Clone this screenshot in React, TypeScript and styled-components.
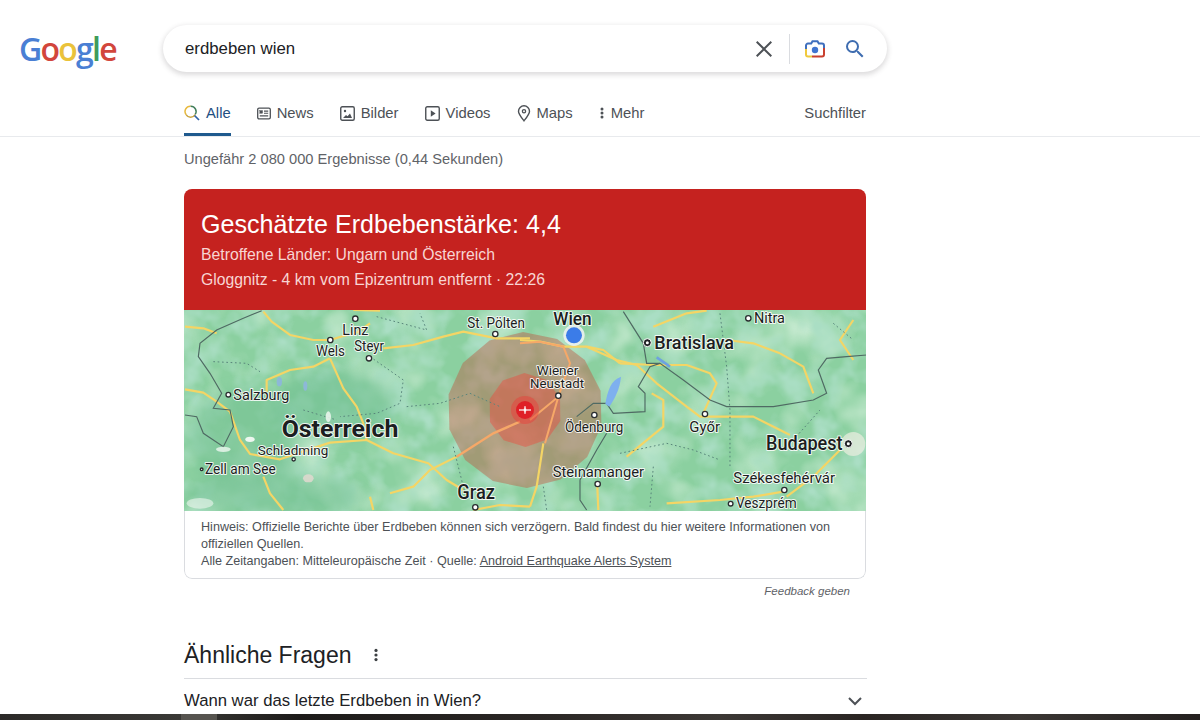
import React from "react";
import styled, { createGlobalStyle } from "styled-components";

const Global = createGlobalStyle`
  html, body { margin: 0; padding: 0; background: #fff; }
  body { font-family: "Liberation Sans", Arial, sans-serif; overflow: hidden; }
`;

const Page = styled.div`
  width: 1200px;
  height: 720px;
  display: flex;
  flex-direction: column;
  overflow: hidden;
`;
const Content = styled.div`
  flex: 1;
  min-height: 0;
`;
const Header = styled.header`
  display: flex;
  align-items: center;
  padding: 25px 0 0 19px;
`;
const Logo = styled.div`
  width: 97px;
  margin-right: 47px;
  font-family: "Open Sans", sans-serif;
  font-size: 32px;
  font-weight: 600;
  letter-spacing: -1.75px;
  line-height: 47px;
  white-space: nowrap;
`;
const Letter = styled.span<{ $c: string }>`
  color: ${(p) => p.$c};
`;
const SearchBox = styled.div`
  width: 724px;
  height: 47px;
  box-sizing: border-box;
  border-radius: 24px;
  background: #fff;
  box-shadow: 0 2px 5px 1px rgba(64, 60, 67, 0.18);
  display: flex;
  align-items: center;
  padding: 0 20px 0 22px;
`;
const Query = styled.div`
  flex: 1;
  font-size: 16.8px;
  color: #202124;
`;
const BoxDivider = styled.div`
  width: 1px;
  height: 30px;
  background: #dadce0;
  margin: 0 14px 0 13px;
`;
const SearchButton = styled.div`
  display: flex;
  margin-left: 17px;
`;
const Tabs = styled.nav`
  display: flex;
  align-items: flex-end;
  height: 65px;
  box-sizing: border-box;
  border-bottom: 1px solid #e8eaed;
  padding: 0 334px 0 184px;
  gap: 26px;
`;
const Tab = styled.div<{ $active?: boolean }>`
  height: 44px;
  box-sizing: border-box;
  display: flex;
  align-items: center;
  gap: 6px;
  padding-top: 1px;
  font-size: 14.8px;
  color: ${(p) => (p.$active ? "#1f4f82" : "#4d5156")};
  border-bottom: 3px solid ${(p) => (p.$active ? "#1f5a8e" : "transparent")};
`;
const FilterTab = styled(Tab)`
  margin-left: auto;
`;
const Main = styled.main`
  margin-left: 184px;
  width: 682px;
`;
const Stats = styled.div`
  margin-top: 13px;
  font-size: 14.65px;
  line-height: 18px;
  color: #5f6368;
`;
const Card = styled.section`
  margin-top: 21px;
  height: 390px;
  border-radius: 8px;
  overflow: hidden;
`;
const RedHead = styled.div`
  height: 121px;
  box-sizing: border-box;
  background: #c5221f;
  padding: 20px 17px 0;
`;
const Title = styled.h2`
  margin: 0;
  font-weight: 400;
  font-size: 25.1px;
  line-height: 31px;
  color: #fff;
`;
const Sub = styled.div`
  font-size: 15.75px;
  line-height: 25px;
  color: #f8d5d3;
  &:first-of-type {
    margin-top: 2px;
  }
`;
const MapFrame = styled.svg`
  display: block;
  width: 682px;
  height: 201px;
  background: #8bd0a0;
`;
const Notes = styled.div`
  height: 68px;
  box-sizing: border-box;
  border: 1px solid #dadce0;
  border-top: none;
  border-radius: 0 0 8px 8px;
  padding: 8px 16px 0;
  font-size: 12.6px;
  line-height: 17px;
  color: #4d5156;
`;
const SourceLink = styled.span`
  text-decoration: underline;
`;
const Feedback = styled.div`
  margin-top: 5px;
  padding-right: 16px;
  text-align: right;
  font-size: 11.5px;
  line-height: 15px;
  font-style: italic;
  color: #5f6368;
`;
const QuestionsHead = styled.div`
  margin-top: 39px;
  display: flex;
  align-items: center;
  gap: 21px;
  height: 34px;
  font-size: 23px;
  color: #202124;
`;
const Question = styled.div`
  margin-top: 6px;
  width: 683px;
  border-top: 1px solid #dadce0;
  height: 34px;
  box-sizing: border-box;
  display: flex;
  align-items: flex-end;
  justify-content: space-between;
  padding-right: 4px;
  font-size: 16.7px;
  line-height: 22px;
  color: #202124;
`;
const BottomBar = styled.div`
  height: 6px;
  flex: none;
  display: flex;
  background: linear-gradient(90deg, #2c2a28 0%, #3a3936 15%, #1d1b1a 25%, #2b2725 45%, #3c3835 60%, #2a2523 72%, #3b3734 85%, #24201f 100%);
`;
const BarTab = styled.div`
  width: 36px;
  margin-left: 181px;
  background: #56544f;
`;
const Place = styled.text<{ $w?: number }>`
  font-family: Roboto, "Liberation Sans", sans-serif;
  font-weight: ${(p) => p.$w ?? 400};
  fill: #1c1e21;
  stroke: rgba(255, 255, 255, 0.85);
  stroke-width: 6px;
  paint-order: stroke;
  stroke-linejoin: round;
`;

const G = "M15.5 14h-.79l-.28-.27A6.471 6.471 0 0 0 16 9.5 6.5 6.5 0 1 0 9.5 16c1.61 0 3.09-.59 4.23-1.57l.27.28v.79l5 4.99L20.49 19l-4.99-5zm-6 0C7.01 14 5 11.99 5 9.5S7.01 5 9.5 5 14 7.01 14 9.5 11.99 14 9.5 14z";

const AlleIcon = () => (
  <svg width="16" height="16" viewBox="0 0 16 16" fill="none">
    <path d="M2 9.5A5.3 5.3 0 0 1 6.6 1.2" stroke="#e8b93c" strokeWidth="1.5" />
    <path d="M6.6 1.2a5.3 5.3 0 0 1 4.6 8.2" stroke="#3f7d5a" strokeWidth="1.5" />
    <path d="M2 9.5a5.3 5.3 0 0 0 9.2 0" stroke="#c9a43e" strokeWidth="1.5" />
    <path d="M10.5 10.5 15 15" stroke="#2f63a8" strokeWidth="1.7" />
  </svg>
);
const NewsIcon = () => (
  <svg width="14" height="15" viewBox="0 0 15 15" fill="none" stroke="#4d5156">
    <rect x="0.75" y="1.75" width="13.5" height="11.5" rx="1.5" strokeWidth="1.4" />
    <rect x="3" y="4.3" width="3" height="3" fill="#4d5156" strokeWidth="0.4" />
    <path d="M7.5 5h4.5M7.5 7.2h4.5M3 10h9" strokeWidth="1.2" />
  </svg>
);
const ImageIcon = () => (
  <svg width="15" height="15" viewBox="0 0 15 15" fill="none" stroke="#4d5156">
    <rect x="0.75" y="0.75" width="13.5" height="13.5" rx="1.5" strokeWidth="1.4" />
    <circle cx="5" cy="5" r="1.2" fill="#4d5156" stroke="none" />
    <path d="M3 12l3-3 1.5 1.2L10 7.5l2 4.5z" fill="#4d5156" stroke="none" />
  </svg>
);
const VideoIcon = () => (
  <svg width="15" height="15" viewBox="0 0 15 15" fill="none" stroke="#4d5156">
    <rect x="0.75" y="0.75" width="13.5" height="13.5" rx="1.5" strokeWidth="1.4" />
    <path d="M5.8 4.3v6.4l4.8-3.2z" fill="#4d5156" stroke="none" />
  </svg>
);
const PinIcon = () => (
  <svg width="14" height="17" viewBox="0.5 0 14 17" fill="none" stroke="#4d5156">
    <path d="M7.5 15.8C4 11.5 2 9.2 2 6.3a5.5 5.5 0 0 1 11 0c0 2.9-2 5.2-5.5 9.5z" strokeWidth="1.4" />
    <circle cx="7.5" cy="6.2" r="1.6" strokeWidth="1.3" />
  </svg>
);
const Dots = ({ c = "#4d5156", h = 12, r = 1.5 }: { c?: string; h?: number; r?: number }) => (
  <svg width="6" height={h} viewBox={`0 0 6 ${h}`} fill={c}>
    <circle cx="3" cy={h * 0.17} r={r} />
    <circle cx="3" cy={h * 0.5} r={r} />
    <circle cx="3" cy={h * 0.83} r={r} />
  </svg>
);
const CloseIcon = () => (
  <svg width="24" height="24" viewBox="0 0 24 24" fill="#4d5156">
    <path d="M20 5.4 18.6 4 12 10.6 5.4 4 4 5.4 10.6 12 4 18.6 5.4 20 12 13.4 18.6 20 20 18.6 13.4 12z" />
  </svg>
);
const CameraIcon = () => (
  <svg width="22" height="20" viewBox="0 0 22 20" fill="none" strokeWidth="2">
    <path d="M2 10V6.5A2 2 0 0 1 4 4.5h3.2L8.5 2.2h5l1.3 2.3H18a2 2 0 0 1 2 2V9" stroke="#3f6fbe" />
    <path d="M2 10v5.5a2 2 0 0 0 2 2h4" stroke="#f0c93c" />
    <path d="M8 17.5h10a2 2 0 0 0 2-2V9" stroke="#c9402f" />
    <circle cx="11" cy="11" r="3.2" fill="#3f74d0" stroke="none" />
  </svg>
);
const SearchIcon = () => (
  <svg width="24" height="24" viewBox="0 0 24 24" fill="#3f6db0">
    <path d={G} />
  </svg>
);
const ChevronIcon = () => (
  <svg width="16" height="22" viewBox="0 0 16 22" fill="none" stroke="#4d5156" strokeWidth="2">
    <path d="M2 8l6 6 6-6" />
  </svg>
);

type L = [string, number, number, number, number, number?];
const leftLabels: L[] = [
  ["Linz", 487, 565, 105, 44],
  ["Wels", 408, 495, 168, 43],
  ["Steyr", 523, 612, 153, 43],
  ["St. Pölten", 862, 1035, 83, 42],
  ["Salzburg", 160, 328, 300, 46],
  ["Österreich", 305, 655, 410, 74, 700],
  ["Schladming", 233, 445, 464, 41],
  ["Zell am See", 75, 287, 523, 43],
  ["Graz", 832, 945, 598, 58, 500],
];
const rightLabels: L[] = [
  ["Wien", 100, 215, 75, 53, 500],
  ["Nitra", 702, 795, 70, 43],
  ["Bratislava", 403, 642, 146, 57, 500],
  ["Wiener", 50, 175, 225, 40],
  ["Neustadt", 30, 192, 265, 40],
  ["Ödenburg", 135, 310, 395, 42],
  ["Győr", 508, 600, 395, 43],
  ["Budapest", 738, 968, 450, 58, 500],
  ["Steinamanger", 98, 372, 530, 43],
  ["Székesfehérvár", 640, 945, 550, 43],
  ["Veszprém", 648, 830, 625, 43],
];
const Places = ({ list }: { list: L[] }) => (
  <>
    {list.map(([t, a, b, y, s, w]) => (
      <Place key={t} x={a} y={y} $w={w} fontSize={s} textLength={b - a} lengthAdjust="spacingAndGlyphs">
        {t}
      </Place>
    ))}
  </>
);

const poly = (cx: number, cy: number, r: number, n: number, rot = 0) =>
  Array.from({ length: n }, (_, i) => {
    const a = rot + (i * Math.PI * 2) / n;
    return `${(cx + r * Math.cos(a)).toFixed(1)},${(cy + r * Math.sin(a)).toFixed(1)}`;
  }).join(" ");

const Y = "#f4d565";
const roadsLeft = [
  "M250,35 L275,65 L330,105 L400,120 L450,120 L490,108 L530,98 L570,70",
  "M15,80 L70,85 L110,100",
  "M15,268 L70,278 L110,305 L150,335 L180,420 L210,462 L300,478 L450,428 L560,420 L640,460 L745,490 L800,540 L850,570",
  "M450,175 L490,265 L530,320 L550,370 L560,420",
  "M260,280 L260,240 L330,210 L400,200 L450,175",
  "M610,145 L700,135 L790,110 L850,95 L950,115 L1050,115",
  "M250,530 L270,580 L310,630",
  "M630,580 L700,560 L750,510 L830,470",
  "M570,590 L580,630",
  "M880,630 L960,615 L1050,620",
  "M520,30 L600,32",
];
const roadsRight = [
  "M0,120 L60,125 L130,140 L200,140 L290,180 L350,195 L410,250 L500,320 L540,350 L700,350 L810,405",
  "M300,190 L400,195 L500,195 L570,220 L590,250 L550,340",
  "M400,80 L500,40 L560,32",
  "M320,470 L430,380 L430,300 L395,280",
  "M800,590 L880,530 L960,450",
  "M70,430 L50,560 L30,620",
  "M232,560 L235,630",
  "M440,610 L600,600 L700,590 L790,575",
  "M1000,180 L960,120 L1000,60",
  "M780,160 L850,200 L880,280",
  "M300,190 L250,150 L200,140",
  "M620,120 L700,130 L780,160",
];

const MapArt = () => (
  <MapFrame viewBox="0 0 682 201">
    <defs>
      <filter id="terrain" x="0" y="0" width="100%" height="100%">
        <feTurbulence type="fractalNoise" baseFrequency="0.035" numOctaves="3" seed="7" />
        <feColorMatrix type="matrix" values="0 0 0 0 0.40  0 0 0 0 0.73  0 0 0 0 0.55  2.8 0 0 0 -1.2" />
      </filter>
      <filter id="terrainLight" x="0" y="0" width="100%" height="100%">
        <feTurbulence type="fractalNoise" baseFrequency="0.02" numOctaves="3" seed="21" />
        <feColorMatrix type="matrix" values="0 0 0 0 0.63  0 0 0 0 0.86  0 0 0 0 0.69  2.2 0 0 0 -1.0" />
      </filter>
      <filter id="blur" x="-20%" y="-20%" width="140%" height="140%">
        <feGaussianBlur stdDeviation="7" />
      </filter>
      <filter id="soft">
        <feGaussianBlur stdDeviation="0.45" />
      </filter>
    </defs>
    <rect width="682" height="201" filter="url(#terrainLight)" />
    <rect width="682" height="201" filter="url(#terrain)" />
    <g filter="url(#blur)">
      <ellipse cx="60" cy="130" rx="55" ry="50" fill="#74c193" fillOpacity="0.6" />
      <ellipse cx="150" cy="95" rx="60" ry="35" fill="#72c092" fillOpacity="0.6" />
      <ellipse cx="90" cy="185" rx="90" ry="20" fill="#74c194" fillOpacity="0.6" />
    </g>
    <polygon points={poly(341, 100, 78, 14, 0.2)} fill="#c0503c" fillOpacity="0.42" />
    <polygon points={poly(341, 100, 37, 10, 0.3)} fill="#f0443a" fillOpacity="0.42" />
    <g filter="url(#soft)">
      <g transform="translate(-4,-10) scale(0.3333)" fill="none">
        {roadsLeft.map((d) => (
          <path key={d} d={d} stroke={Y} strokeWidth="6.5" strokeLinejoin="round" />
        ))}
        <path d="M830,470 L940,400 L1020,365" stroke="#f6a868" strokeWidth="7" />
        <path d="M245,32 L190,55 L110,90 L60,130 L55,170 L90,220 L125,280 L100,325 L150,330 L160,380 L130,440 L70,400 L50,350 L15,345" stroke="#4f6a63" strokeWidth="3.5" />
        <path d="M100,185 L200,190 L240,215 M570,170 L670,240 L660,310 L590,340 L480,350 M370,330 L470,360 M680,320 L780,310 L870,280 L960,320 M820,440 L860,600 M590,50 L740,90 L720,40" stroke="#58857a" strokeWidth="3" strokeDasharray="5 8" />
        <ellipse cx="298" cy="245" rx="8" ry="14" fill="#8db8d8" />
        <ellipse cx="376" cy="258" rx="6" ry="14" fill="#8db8d8" />
        <ellipse cx="210" cy="418" rx="14" ry="8" fill="#eef7f0" />
        <ellipse cx="130" cy="448" rx="22" ry="8" fill="#eef7f0" fillOpacity="0.8" />
        <ellipse cx="445" cy="350" rx="8" ry="16" fill="#eef7f0" fillOpacity="0.85" />
        <ellipse cx="60" cy="610" rx="40" ry="16" fill="#eef7f0" fillOpacity="0.6" />
        <ellipse cx="385" cy="535" rx="16" ry="12" fill="#e6d9d2" fillOpacity="0.8" />
      </g>
      <g transform="translate(336,-10) scale(0.3333)" fill="none">
        {roadsRight.map((d) => (
          <path key={d} d={d} stroke={Y} strokeWidth="6.5" strokeLinejoin="round" />
        ))}
        <path d="M0,130 L60,125 L130,140 L150,190 L115,290 L30,360 M75,430 L115,290" stroke="#f6a868" strokeWidth="6" />
        <path d="M310,35 L370,130 L380,190 L420,190 L490,240 L570,300 L620,320 L760,320 L880,300 L920,280 L895,210 L920,175 L980,170 L1040,165" stroke="#4f6a63" strokeWidth="3.5" />
        <path d="M170,350 L220,310 L260,310 L280,340 L375,335 L375,280 L355,260 L390,200 L420,190 M260,400 L230,450 L180,540 L180,600 L200,630" stroke="#4f6a63" strokeWidth="3.5" />
        <path d="M600,40 L620,200 L630,330 L630,500 M300,460 L440,430 L520,450 L600,480 M70,560 L80,630 M400,500 L390,620 M820,420 L900,330 M940,70 L1000,120" stroke="#58857a" strokeWidth="3" strokeDasharray="5 8" />
        <path d="M256,312 C262,275 272,240 303,230 C300,265 285,295 268,320 Z" fill="#7eb0ee" />
        <path d="M410,172 L450,200" stroke="#6ea2e0" strokeWidth="8" />
        <circle cx="1000" cy="432" r="36" fill="#f3efe4" fillOpacity="0.65" />
      </g>
    </g>
    <circle cx="341" cy="100" r="14" fill="#e8413c" fillOpacity="0.5" />
    <circle cx="341" cy="100" r="9" fill="#df2027" />
    <path d="M335,100 H347" stroke="#fff" strokeWidth="1.2" />
    <path d="M341,96 L342,100 L341,104 L340,100 Z" fill="#fff" stroke="#fff" strokeWidth="0.5" />
    <g transform="translate(-4,-10) scale(0.3333)">
      <g fill="#fff" stroke="#2a2d30" strokeWidth="4">
        <circle cx="526" cy="56" r="8" />
        <circle cx="451" cy="120" r="8" />
        <circle cx="567" cy="175" r="8" />
        <circle cx="946" cy="102" r="8" />
        <circle cx="145" cy="284" r="7" />
        <circle cx="341" cy="478" r="5" />
        <circle cx="65" cy="508" r="4" />
        <circle cx="886" cy="622" r="8" />
      </g>
      <Places list={leftLabels} />
    </g>
    <g transform="translate(336,-10) scale(0.3333)">
      <g fill="#fff" stroke="#2a2d30" strokeWidth="4">
        <circle cx="115" cy="287" r="8" />
        <circle cx="223" cy="345" r="8" />
        <circle cx="555" cy="342" r="8" />
        <circle cx="233" cy="552" r="8" />
        <circle cx="685" cy="55" r="8" />
        <circle cx="793" cy="570" r="8" />
        <circle cx="632" cy="611" r="7" />
      </g>
      <g fill="#1f2124" stroke="#fff" strokeWidth="3">
        <circle cx="382" cy="128" r="12" />
        <circle cx="985" cy="431" r="12" />
      </g>
      <circle cx="382" cy="128" r="4.5" fill="#fff" />
      <circle cx="985" cy="431" r="4.5" fill="#fff" />
      <Places list={rightLabels} />
      <circle cx="162" cy="106" r="32" fill="#eef2f3" fillOpacity="0.85" />
      <circle cx="162" cy="106" r="24" fill="#3b7ce8" />
    </g>
  </MapFrame>
);

export default function App() {
  return (
    <Page>
      <Global />
      <Content>
        <Header>
          <Logo>
            <Letter $c="#4a7fd4">G</Letter>
            <Letter $c="#d2463c">o</Letter>
            <Letter $c="#eac23a">o</Letter>
            <Letter $c="#4a7fd4">g</Letter>
            <Letter $c="#3f9c5a">l</Letter>
            <Letter $c="#d2463c">e</Letter>
          </Logo>
          <SearchBox>
            <Query>erdbeben wien</Query>
            <CloseIcon />
            <BoxDivider />
            <CameraIcon />
            <SearchButton>
              <SearchIcon />
            </SearchButton>
          </SearchBox>
        </Header>
        <Tabs>
          <Tab $active>
            <AlleIcon />
            Alle
          </Tab>
          <Tab>
            <NewsIcon />
            News
          </Tab>
          <Tab>
            <ImageIcon />
            Bilder
          </Tab>
          <Tab>
            <VideoIcon />
            Videos
          </Tab>
          <Tab>
            <PinIcon />
            Maps
          </Tab>
          <Tab>
            <Dots />
            Mehr
          </Tab>
          <FilterTab>Suchfilter</FilterTab>
        </Tabs>
        <Main>
          <Stats>Ungefähr 2 080 000 Ergebnisse (0,44 Sekunden)</Stats>
          <Card>
            <RedHead>
              <Title>Geschätzte Erdbebenstärke: 4,4</Title>
              <Sub>Betroffene Länder: Ungarn und Österreich</Sub>
              <Sub>Gloggnitz - 4 km vom Epizentrum entfernt · 22:26</Sub>
            </RedHead>
            <MapArt />
            <Notes>
              Hinweis: Offizielle Berichte über Erdbeben können sich verzögern. Bald findest du hier weitere Informationen von offiziellen Quellen.
              <br />
              Alle Zeitangaben: Mitteleuropäische Zeit · Quelle: <SourceLink>Android Earthquake Alerts System</SourceLink>
            </Notes>
          </Card>
          <Feedback>Feedback geben</Feedback>
          <QuestionsHead>
            Ähnliche Fragen
            <Dots c="#3c4043" h={14} r={1.6} />
          </QuestionsHead>
          <Question>
            Wann war das letzte Erdbeben in Wien?
            <ChevronIcon />
          </Question>
        </Main>
      </Content>
      <BottomBar>
        <BarTab />
      </BottomBar>
    </Page>
  );
}
